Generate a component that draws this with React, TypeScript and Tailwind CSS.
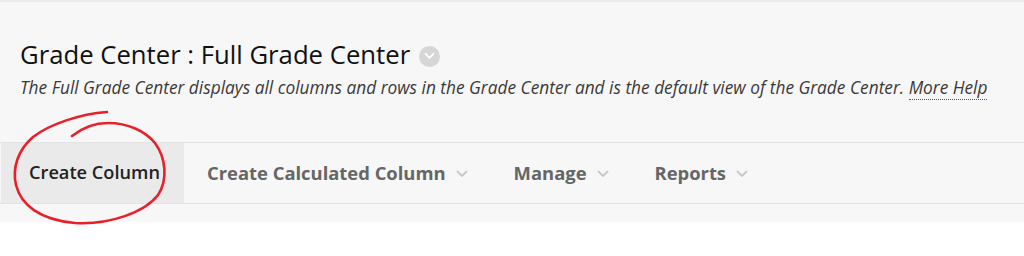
import React from 'react';

const tabs = [
  { label: 'Create Calculated Column' },
  { label: 'Manage' },
  { label: 'Reports' },
];

function Chevron({ className }: { className?: string }) {
  return (
    <svg width="12" height="8" viewBox="0 0 12 8" className={className} fill="none">
      <path d="M1.5 1.5 L6 6 L10.5 1.5" stroke="currentColor" strokeWidth="1.8" strokeLinecap="round" strokeLinejoin="round" />
    </svg>
  );
}

// hand drawn red ring around the active tab
function Scribble() {
  return (
    <svg
      className="absolute left-0 top-0 pointer-events-none"
      width="200"
      height="240"
      viewBox="0 0 200 240"
      fill="none"
    >
      <path
        d="M107 112 C 80 114, 50 124, 33 137 C 18 150, 12 168, 16 185 C 21 205, 40 220, 75 223 C 110 225, 145 212, 158 195 C 168 180, 166 158, 155 143 C 145 131, 128 123, 108 123 C 95 123, 82 128, 72 136"
        stroke="#e8202a"
        strokeWidth="2.6"
        strokeLinecap="round"
      />
    </svg>
  );
}

export default function App() {
  return (
    <div className="relative w-[1024px] h-[256px] overflow-hidden bg-white font-['Open_Sans',sans-serif]">
      <div className="h-[222px] bg-[#f7f7f7] border-t-2 border-[#ececec] flex flex-col">
        <div className="px-5 pt-[37px]">
          <h1 className="flex items-center gap-[9px] text-[25.7px] leading-[32px] text-[#111]">
            Grade Center : Full Grade Center
            <span className="w-[21px] h-[21px] rounded-full bg-[#d6d6d6] flex items-center justify-center text-white mt-[2px]">
              <Chevron className="w-[11px] h-[8px]" />
            </span>
          </h1>
          <p className="mt-[6px] text-[17.3px] leading-[22px] italic text-[#3a3a3a] whitespace-nowrap">
            The Full Grade Center displays all columns and rows in the Grade Center and is the default view of the Grade Center.{' '}
            <span className="border-b border-dotted border-[#555]">More Help</span>
          </p>
        </div>
        <nav className="mt-[43px] h-[62px] border-y border-[#e3e3e3] flex">
          <div className="w-[183px] ml-px bg-[#eaeaea] flex items-center pl-[28px] text-[18.2px] font-semibold text-[#222]">
            Create Column
          </div>
          {tabs.map((t) => (
            <div key={t.label} className="flex items-center gap-[10px] px-[23px] text-[18.4px] font-bold text-[#666]">
              {t.label}
              <Chevron className="text-[#c8c8c8] mt-[1px]" />
            </div>
          ))}
        </nav>
      </div>
      <Scribble />
    </div>
  );
}
